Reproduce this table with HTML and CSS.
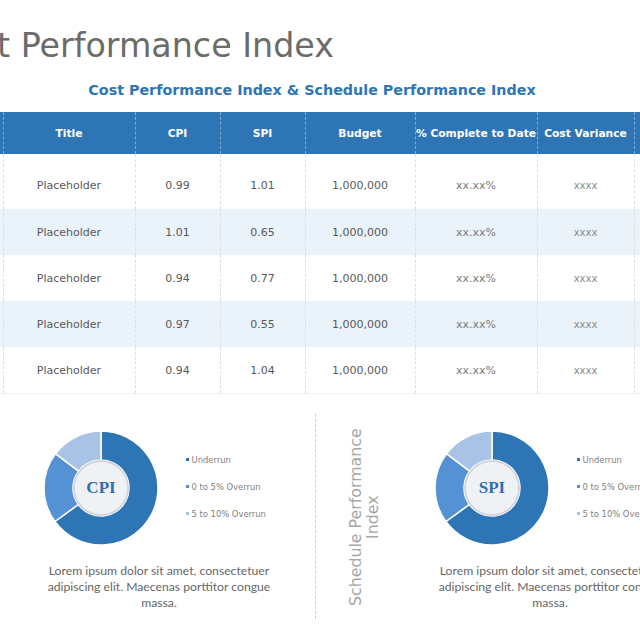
FILE: index.html
```html
<!DOCTYPE html>
<html>
<head>
<meta charset="utf-8">
<link rel="stylesheet" href="styles.css">
</head>
<body>
<div class="slide">
  <h1 class="title">t Performance Index</h1>
  <h2 class="subtitle">Cost Performance Index &amp; Schedule Performance Index</h2>
  <table class="grid">
    <colgroup>
      <col class="c-edge"><col class="c-title"><col class="c-num"><col class="c-num"><col class="c-budget"><col class="c-pct"><col class="c-var"><col class="c-rest">
    </colgroup>
    <thead>
      <tr><th></th><th>Title</th><th>CPI</th><th>SPI</th><th>Budget</th><th>% Complete to Date</th><th>Cost Variance</th><th></th></tr>
    </thead>
    <tbody>
      <tr class="first"><td></td><td>Placeholder</td><td>0.99</td><td>1.01</td><td>1,000,000</td><td class="pct">xx.xx%</td><td class="var">xxxx</td><td></td></tr>
      <tr class="alt"><td></td><td>Placeholder</td><td>1.01</td><td>0.65</td><td>1,000,000</td><td class="pct">xx.xx%</td><td class="var">xxxx</td><td></td></tr>
      <tr><td></td><td>Placeholder</td><td>0.94</td><td>0.77</td><td>1,000,000</td><td class="pct">xx.xx%</td><td class="var">xxxx</td><td></td></tr>
      <tr class="alt"><td></td><td>Placeholder</td><td>0.97</td><td>0.55</td><td>1,000,000</td><td class="pct">xx.xx%</td><td class="var">xxxx</td><td></td></tr>
      <tr><td></td><td>Placeholder</td><td>0.94</td><td>1.04</td><td>1,000,000</td><td class="pct">xx.xx%</td><td class="var">xxxx</td><td></td></tr>
    </tbody>
  </table>

  <div class="bottom">
    <div class="panel">
      <div class="chart-row">
        <div class="donut">
          <svg width="114" height="114" viewBox="0 0 114 114">
            <path d="M57,0 A57,57 0 1 1 10.89,90.50 L34.35,73.46 A28,28 0 1 0 57,29 Z" fill="#2e75b6" stroke="#fff" stroke-width="1.5"/>
            <path d="M10.89,90.50 A57,57 0 0 1 11.48,22.70 L34.64,40.15 A28,28 0 0 0 34.35,73.46 Z" fill="#5592d3" stroke="#fff" stroke-width="1.5"/>
            <path d="M11.48,22.70 A57,57 0 0 1 57,0 L57,29 A28,28 0 0 0 34.64,40.15 Z" fill="#a9c3e6" stroke="#fff" stroke-width="1.5"/>
            <circle cx="57" cy="57" r="27" fill="#eff1f5" stroke="#d2d6dd" stroke-width="2"/>
          </svg>
          <span class="donut-label">CPI</span>
        </div>
        <ul class="legend">
          <li><i class="dot d1"></i>Underrun</li>
          <li><i class="dot d2"></i>0 to 5% Overrun</li>
          <li><i class="dot d3"></i>5 to 10% Overrun</li>
        </ul>
      </div>
      <p class="lorem">Lorem ipsum dolor sit amet, consectetuer adipiscing elit. Maecenas porttitor congue massa.</p>
    </div>

    <div class="divider"></div>

    <div class="vside">
      <div class="vtext">Schedule Performance Index</div>
    </div>

    <div class="panel">
      <div class="chart-row">
        <div class="donut">
          <svg width="114" height="114" viewBox="0 0 114 114">
            <path d="M57,0 A57,57 0 1 1 10.89,90.50 L34.35,73.46 A28,28 0 1 0 57,29 Z" fill="#2e75b6" stroke="#fff" stroke-width="1.5"/>
            <path d="M10.89,90.50 A57,57 0 0 1 11.48,22.70 L34.64,40.15 A28,28 0 0 0 34.35,73.46 Z" fill="#5592d3" stroke="#fff" stroke-width="1.5"/>
            <path d="M11.48,22.70 A57,57 0 0 1 57,0 L57,29 A28,28 0 0 0 34.64,40.15 Z" fill="#a9c3e6" stroke="#fff" stroke-width="1.5"/>
            <circle cx="57" cy="57" r="27" fill="#eff1f5" stroke="#d2d6dd" stroke-width="2"/>
          </svg>
          <span class="donut-label">SPI</span>
        </div>
        <ul class="legend">
          <li><i class="dot d1"></i>Underrun</li>
          <li><i class="dot d2"></i>0 to 5% Overrun</li>
          <li><i class="dot d3"></i>5 to 10% Overrun</li>
        </ul>
      </div>
      <p class="lorem">Lorem ipsum dolor sit amet, consectetuer adipiscing elit. Maecenas porttitor congue massa.</p>
    </div>
  </div>
</div>
</body>
</html>
```

FILE: styles.css
```css
html, body {
  margin: 0;
  padding: 0;
  background: #ffffff;
  overflow: hidden;
}

.slide {
  width: 640px;
  height: 640px;
  overflow: hidden;
  font-family: "DejaVu Sans", Verdana, sans-serif;
}

.title {
  margin: 0;
  padding-top: 26px;
  margin-left: -3px;
  font-size: 33.3px;
  line-height: 40px;
  font-weight: normal;
  color: #6b6b6b;
  white-space: nowrap;
}

.subtitle {
  margin: 0;
  padding-top: 14px;
  padding-right: 16px;
  height: 34px;
  box-sizing: border-box;
  text-align: center;
  font-size: 14.3px;
  line-height: 20px;
  font-weight: bold;
  color: #2e75b6;
  white-space: nowrap;
}

.grid {
  margin-top: 12px;
  width: 660px;
  table-layout: fixed;
  border-collapse: collapse;
  border-bottom: 1px solid #eef1f4;
}

.c-edge { width: 3px; }
.c-title { width: 132px; }
.c-num { width: 85px; }
.c-budget { width: 110px; }
.c-pct { width: 122px; }
.c-var { width: 97px; }
.c-rest { width: 26px; }

.grid th {
  height: 42px;
  padding: 0;
  background: #2e75b6;
  color: #ffffff;
  font-size: 10.7px;
  font-weight: bold;
  text-align: center;
  white-space: nowrap;
  border-left: 1px dashed #7fa9d6;
}

.grid th:first-child { border-left: none; }

.grid td {
  height: 46px;
  padding: 0;
  text-align: center;
  font-size: 11px;
  color: #595959;
  border-left: 1px dashed #dcdfe3;
  white-space: nowrap;
}

.grid td:first-child { border-left: none; }

.grid tr.first td {
  height: 55px;
  padding-top: 7px;
  box-sizing: border-box;
}

.grid tr.alt td { background: #eaf2fa; }

.grid td.pct { font-size: 11px; color: #7a7a7a; }
.grid td.var { font-size: 10px; color: #8a8a8a; }

.bottom {
  display: flex;
  margin-top: 20px;
  height: 205px;
}

.panel {
  flex: 0 0 315px;
  width: 315px;
  padding-top: 17px;
  box-sizing: border-box;
}

.chart-row {
  display: flex;
  align-items: center;
  padding-left: 44px;
}

.donut {
  position: relative;
  width: 114px;
  height: 114px;
  flex: 0 0 114px;
}

.donut svg { display: block; }

.donut-label {
  position: absolute;
  left: 0;
  right: 0;
  top: 47px;
  text-align: center;
  font-family: "Liberation Serif", "Times New Roman", serif;
  font-weight: bold;
  font-size: 17px;
  line-height: 20px;
  color: #2e6fb0;
}

.legend {
  list-style: none;
  margin: 0 0 0 28px;
  padding: 0;
  display: flex;
  flex-direction: column;
  gap: 17px;
  margin-top: -3px;
}

.legend li {
  display: flex;
  align-items: center;
  font-size: 8.4px;
  line-height: 10px;
  color: #7f7f7f;
  white-space: nowrap;
}

.dot {
  display: inline-block;
  width: 2.5px;
  height: 2.5px;
  margin-right: 3px;
}

.d1 { background: #2e75b6; }
.d2 { background: #5592d3; }
.d3 { background: #a9c3e6; }

.lorem {
  width: 234px;
  margin: 18px 0 0 42px;
  text-align: center;
  font-family: Lato, "Liberation Sans", sans-serif;
  font-size: 12.2px;
  line-height: 16px;
  color: #666666;
}

.divider {
  flex: 0 0 0;
  width: 0;
  border-left: 1px dashed #d0d0d0;
}

.vside {
  flex: 0 0 75px;
  display: flex;
  align-items: center;
  padding-left: 31px;
  box-sizing: border-box;
}

.vtext {
  writing-mode: vertical-rl;
  transform: rotate(180deg);
  text-align: center;
  font-size: 15.8px;
  line-height: 17px;
  color: #a6a6a6;
  white-space: normal;
  height: 190px;
}
```
